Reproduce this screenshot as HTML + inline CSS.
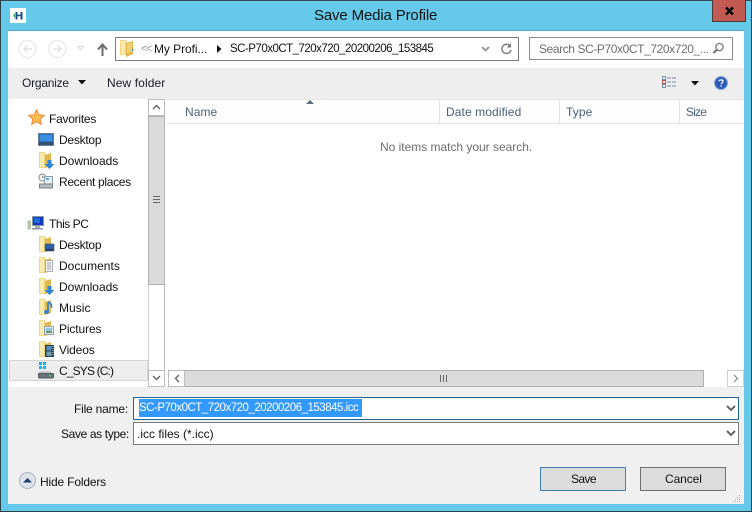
<!DOCTYPE html>
<html><head><meta charset="utf-8">
<style>
html,body{margin:0;padding:0}
body{width:752px;height:512px;overflow:hidden;position:relative;background:#65c9ea;font-family:"Liberation Sans",sans-serif;font-size:12px;color:#000}
.a{position:absolute;box-sizing:border-box}
.t{position:absolute;white-space:nowrap;line-height:14px;height:14px}
.g{color:#4c607a}
svg{position:absolute;display:block;overflow:visible}
</style></head><body>
<!-- window frame -->
<div class="a" style="left:0;top:0;width:752px;height:512px;border:1px solid #2c3e46;border-top-color:#3a4a52"></div>
<div class="a" style="left:8px;top:30px;width:736px;height:1px;background:#58a6c4"></div>
<!-- app icon -->
<div class="a" style="left:10px;top:8px;width:16px;height:15px;background:#fff"></div>
<svg style="left:10px;top:8px" width="16" height="15"><path d="M6.500 4v7.500M11.500 4v7.500" stroke="#14508c" stroke-width="2"/><path d="M7 7.500h4" stroke="#14508c" stroke-width="1.500"/><path d="M3 7.500h3" stroke="#e8a020" stroke-width="1.500"/><path d="M4.500 5.500v4" stroke="#3aa655" stroke-width="1"/></svg>
<!-- title -->
<div class="t" style="left:314px;top:8px;font-size:15px;line-height:16px;height:16px;letter-spacing:-.15px;color:#111">Save Media Profile</div>
<!-- close -->
<div class="a" style="left:712px;top:0;width:34px;height:22px;background:#c15a50;border:1px solid #4a3a3a;border-top:0"></div>
<svg style="left:725px;top:7px" width="9" height="8"><path d="M1 .5L8 7.500M8 .5L1 7.500" stroke="#000" stroke-width="2.400"/></svg>

<!-- main client -->
<div class="a" style="left:8px;top:31px;width:736px;height:473px;background:#fff"></div>
<!-- nav area -->
<svg style="left:18px;top:39px" width="20" height="20"><circle cx="9.500" cy="10" r="8.500" fill="#fff" stroke="#e6e6e6" stroke-width="1.200"/><path d="M14 10H6M9.500 6.500L6 10l3.500 3.500" fill="none" stroke="#e2e2e2" stroke-width="1.500"/></svg>
<svg style="left:48px;top:39px" width="20" height="20"><circle cx="9.500" cy="10" r="8.500" fill="#fff" stroke="#e6e6e6" stroke-width="1.200"/><path d="M5 10h8M9.500 6.500L13 10l-3.500 3.500" fill="none" stroke="#e2e2e2" stroke-width="1.500"/></svg>
<svg style="left:77px;top:46px" width="8" height="5"><path d="M.5.500h6L3.500 4z" fill="#fff" stroke="#d8d8d8"/></svg>
<svg style="left:97px;top:43px" width="12" height="14"><path d="M5.500 13V2M1 6.500L5.500 1.500 10 6.500" fill="none" stroke="#6b6b6b" stroke-width="2"/></svg>
<!-- address -->
<div class="a" style="left:115px;top:37px;width:404px;height:24px;border:1px solid #7a7a7a;background:#fff"></div>
<svg style="left:120px;top:40px" width="14" height="17"><path d="M0 0h6l1 2v13H0z" fill="#f0d880"/><path d="M1 1h4v13H1z" fill="#f8eab0"/><path d="M6 3l7-2v13l-7 3z" fill="#e0b84e"/><path d="M7 4l5-1.500v9L7 13z" fill="#f0d070"/><rect x="12" y="9" width="1.500" height="2" fill="#4a9ad8"/></svg>
<div class="t" style="left:141px;top:42px;color:#9a9a9a;font-size:11px;letter-spacing:-1.500px">&lt;&lt;</div>
<div class="t" style="left:154px;top:42px;letter-spacing:-.06px;color:#111">My Profi...</div>
<svg style="left:217px;top:45px" width="5" height="8"><path d="M0 0l4.500 4L0 8z" fill="#111"/></svg>
<div class="t" style="left:230px;top:42px;font-size:11.500px;letter-spacing:-.51px;color:#111">SC-P70x0CT_720x720_20200206_153845</div>
<svg style="left:481px;top:46px" width="9" height="7"><path d="M1 1l3.500 3.500L8 1" fill="none" stroke="#9a9a9a" stroke-width="2"/></svg>
<svg style="left:500px;top:42px" width="13" height="14"><path d="M10.500 4.500A4.600 4.600 0 1 0 11 8" fill="none" stroke="#7a7a7a" stroke-width="1.400"/><path d="M11 1v4.500H6.800z" fill="#7a7a7a"/></svg>
<!-- search -->
<div class="a" style="left:529px;top:37px;width:204px;height:23px;border:1px solid #8a8a8a;background:#fff"></div>
<div class="t" style="left:539px;top:42px;color:#6d6d6d;letter-spacing:-.41px">Search SC-P70x0CT_720x720_...</div>
<svg style="left:712px;top:42px" width="12" height="13"><circle cx="7.500" cy="5" r="3.600" fill="#fff" stroke="#888" stroke-width="1.500"/><path d="M5 7.500L1.500 11" stroke="#777" stroke-width="2.200"/></svg>

<!-- toolbar -->
<div class="a" style="left:8px;top:68px;width:736px;height:31px;background:#eeeeee"></div>
<div class="t" style="left:22px;top:76px;letter-spacing:-.23px;color:#1a1a2a">Organize</div>
<svg style="left:78px;top:80px" width="8" height="5"><path d="M0 0h8L4 4.500z" fill="#111"/></svg>
<div class="t" style="left:107px;top:76px;letter-spacing:.1px;color:#1a1a2a">New folder</div>
<svg style="left:662px;top:76px" width="16" height="13"><rect x=".5" y=".5" width="3" height="3" fill="#fff" stroke="#7a8ea8"/><rect x=".5" y="4.500" width="3" height="3" fill="#fff" stroke="#c05050"/><rect x=".5" y="8.500" width="3" height="3" fill="#fff" stroke="#7a8ea8"/><path d="M5 2h10M5 6h10M5 10h10" stroke="#7488a4" stroke-dasharray="4 1"/></svg>
<svg style="left:691px;top:81px" width="8" height="5"><path d="M0 0h8L4 4.500z" fill="#111"/></svg>
<svg style="left:714px;top:76px" width="14" height="14"><circle cx="7" cy="7" r="6.500" fill="#2f62c0" stroke="#8aa4c8"/><circle cx="7" cy="7" r="4.500" fill="#2a55b0"/><path d="M5 5.200C5.300 3.500 9 3.400 9 5.400 9 6.800 7.200 6.800 7.200 8.300" fill="none" stroke="#fff" stroke-width="1.300"/><rect x="6.500" y="9.300" width="1.400" height="1.400" fill="#fff"/></svg>

<!-- nav pane -->
<svg style="left:28px;top:109px" width="17" height="16"><path d="M8.500.8l2.300 5 5.400.6-4 3.700 1.100 5.300-4.800-2.700-4.800 2.700 1.100-5.300-4-3.700 5.400-.6z" fill="#fbbe4e" stroke="#e78a3a" stroke-width="1"/></svg>
<div class="t" style="left:49px;top:112px;letter-spacing:-.25px;color:#111">Favorites</div>

<svg style="left:38px;top:133px" width="16" height="14"><rect x=".5" y=".5" width="15" height="12" fill="#2a6fc4" stroke="#6b7f94"/><rect x="2" y="2" width="12" height="6" fill="#3b8fe0"/><rect x="1" y="9" width="14" height="3" fill="#33506e"/></svg>
<div class="t" style="left:59px;top:133px;letter-spacing:-.25px;color:#111">Desktop</div>

<svg style="left:39px;top:152px" width="17" height="17"><path d="M0 0h6l1 2v14H0z" fill="#f0d880"/><path d="M1 1h4v14H1z" fill="#f8eab0"/><path d="M6 3l6-2v13l-6 2z" fill="#e0b84e"/><path d="M8.500 8h4v4h3l-5 5-5-5h3z" fill="#2f87dc"/></svg>
<div class="t" style="left:59px;top:154px;letter-spacing:-.01px;color:#111">Downloads</div>

<svg style="left:38px;top:173px" width="16" height="16"><circle cx="4.500" cy="4.500" r="3.500" fill="#fff" stroke="#8a8a8a"/><path d="M4.500 2.500v2h2" fill="none" stroke="#777" stroke-width=".8"/><rect x="6.500" y="3.500" width="8" height="8" fill="#e6eef6" stroke="#8a9aa8"/><rect x="8" y="5" width="3" height="2" fill="#6aa8dc"/><rect x="1.500" y="11" width="13" height="4" fill="#b5bcc0" stroke="#7a8288"/></svg>
<div class="t" style="left:59px;top:175px;letter-spacing:-.33px;color:#111">Recent places</div>

<svg style="left:28px;top:216px" width="16" height="15"><rect x="0" y="5" width="2.500" height="8" fill="#c6d0b8" stroke="#7a8a70" stroke-width=".5"/><rect x="4.500" y=".5" width="11" height="9" fill="#1438b8" stroke="#8a97a6"/><rect x="6" y="2" width="6" height="5" fill="#1e6ce0"/><rect x="7" y="10" width="5" height="2" fill="#a4acb4"/><rect x="4" y="12" width="11" height="1.500" fill="#8c949c"/></svg>
<div class="t" style="left:49px;top:217px;letter-spacing:-.47px;color:#111">This PC</div>

<svg style="left:39px;top:236px" width="17" height="17"><path d="M0 0h6l1 2v14H0z" fill="#f0d880"/><path d="M1 1h4v14H1z" fill="#f8eab0"/><path d="M6 3l6-2v13l-6 2z" fill="#e0b84e"/><rect x="6" y="8" width="9" height="7" fill="#2b5fa8" stroke="#39536f" stroke-width=".6"/><rect x="7" y="13" width="7" height="1.500" fill="#26384c"/></svg>
<div class="t" style="left:59px;top:238px;letter-spacing:-.25px;color:#111">Desktop</div>

<svg style="left:39px;top:257px" width="17" height="17"><path d="M0 0h6l1 2v14H0z" fill="#f0d880"/><path d="M1 1h4v14H1z" fill="#f8eab0"/><path d="M6 3l6-2v13l-6 2z" fill="#e0b84e"/><rect x="6.500" y="3.500" width="7" height="11" fill="#f6f6f6" stroke="#aaa"/><path d="M8 6h4M8 8h4M8 10h4M8 12h4" stroke="#9aa0a8"/></svg>
<div class="t" style="left:59px;top:259px;letter-spacing:.02px;color:#111">Documents</div>

<svg style="left:39px;top:278px" width="17" height="17"><path d="M0 0h6l1 2v14H0z" fill="#f0d880"/><path d="M1 1h4v14H1z" fill="#f8eab0"/><path d="M6 3l6-2v13l-6 2z" fill="#e0b84e"/><path d="M8.500 8h4v4h3l-5 5-5-5h3z" fill="#2f87dc"/></svg>
<div class="t" style="left:59px;top:280px;letter-spacing:-.01px;color:#111">Downloads</div>

<svg style="left:39px;top:299px" width="17" height="17"><path d="M0 0h6l1 2v14H0z" fill="#f0d880"/><path d="M1 1h4v14H1z" fill="#f8eab0"/><path d="M6 3l6-2v13l-6 2z" fill="#e0b84e"/><path d="M9 3v10" stroke="#2f7fd0" stroke-width="1.600"/><path d="M9 3c3 1 4 3 3.500 6" fill="none" stroke="#2f7fd0" stroke-width="1.500"/><ellipse cx="7.500" cy="13" rx="2.500" ry="2" fill="#2f7fd0"/></svg>
<div class="t" style="left:59px;top:301px;letter-spacing:.03px;color:#111">Music</div>

<svg style="left:39px;top:320px" width="17" height="17"><path d="M0 0h6l1 2v14H0z" fill="#f0d880"/><path d="M1 1h4v14H1z" fill="#f8eab0"/><path d="M6 3l6-2v13l-6 2z" fill="#e0b84e"/><rect x="5.500" y="6.500" width="9" height="8" fill="#dde8ee" stroke="#99a2a8"/><rect x="7" y="8" width="6" height="3" fill="#8fc4e4"/><rect x="7" y="11" width="6" height="2" fill="#6c9a68"/></svg>
<div class="t" style="left:59px;top:322px;letter-spacing:-.12px;color:#111">Pictures</div>

<svg style="left:39px;top:341px" width="17" height="17"><path d="M0 0h6l1 2v14H0z" fill="#f0d880"/><path d="M1 1h4v14H1z" fill="#f8eab0"/><path d="M6 3l6-2v13l-6 2z" fill="#e0b84e"/><rect x="6" y="4" width="9" height="12" fill="#2b3f50"/><rect x="7.500" y="5" width="5" height="4.500" fill="#4f93c8"/><rect x="7.500" y="10.500" width="5" height="4.500" fill="#6fa0b0"/><path d="M14 5v10" stroke="#d8d8d8" stroke-dasharray="1 1"/></svg>
<div class="t" style="left:59px;top:343px;letter-spacing:-.15px;color:#111">Videos</div>

<div class="a" style="left:9px;top:360px;width:139px;height:21px;background:#eeeeee;border:1px solid #d4d4d4"></div>
<svg style="left:38px;top:362px" width="16" height="17"><rect x="1" y="0" width="3" height="3" fill="#10b4f4"/><rect x="5" y="0" width="3" height="3" fill="#10b4f4"/><rect x="1" y="4" width="3" height="3" fill="#10b4f4"/><rect x="5" y="4" width="3" height="3" fill="#10b4f4"/><path d="M2 9h10l3 3H0z" fill="#c4c8cc"/><rect x=".5" y="11.500" width="15" height="4.500" rx="1" fill="#6a7478" stroke="#50585c"/><rect x="11" y="13" width="2" height="1.500" fill="#40d060"/></svg>
<div class="t" style="left:59px;top:364px;letter-spacing:-.85px;color:#111">C_SYS (C:)</div>

<!-- vertical scrollbar -->
<div class="a" style="left:148px;top:99px;width:17px;height:288px;background:#fff;border:1px solid #b8b8b8;border-top:0;border-bottom:0;border-left-color:#d0d0d0"></div>
<div class="a" style="left:148px;top:99px;width:17px;height:17px;background:#fff;border:1px solid #bcbcbc"></div>
<svg style="left:152px;top:104px" width="9" height="6"><path d="M1 5l3.500-3.500L8 5" fill="none" stroke="#666" stroke-width="1.400"/></svg>
<div class="a" style="left:148px;top:116px;width:17px;height:169px;background:#dadada;border:1px solid #b0b0b0"></div>
<div class="a" style="left:153px;top:196px;width:7px;height:1px;background:#666"></div>
<div class="a" style="left:153px;top:199px;width:7px;height:1px;background:#666"></div>
<div class="a" style="left:153px;top:202px;width:7px;height:1px;background:#666"></div>
<div class="a" style="left:148px;top:370px;width:17px;height:17px;background:#fff;border:1px solid #bcbcbc"></div>
<svg style="left:152px;top:375px" width="9" height="6"><path d="M1 1l3.500 3.500L8 1" fill="none" stroke="#666" stroke-width="1.400"/></svg>

<!-- list header -->
<div class="a" style="left:166px;top:99px;width:578px;height:25px;background:#fdfdfd;border-top:1px solid #e4e4e4;border-bottom:1px solid #e4e4e4"></div>
<div class="a" style="left:439px;top:100px;width:1px;height:23px;background:#e4e4e4"></div>
<div class="a" style="left:559px;top:100px;width:1px;height:23px;background:#e4e4e4"></div>
<div class="a" style="left:679px;top:100px;width:1px;height:23px;background:#e4e4e4"></div>
<div class="t g" style="left:185px;top:105px;letter-spacing:.05px">Name</div>
<svg style="left:306px;top:100px" width="8" height="4"><path d="M0 4L4 0l4 4z" fill="#5a6c84"/></svg>
<div class="t g" style="left:446px;top:105px;letter-spacing:.1px">Date modified</div>
<div class="t g" style="left:566px;top:105px;letter-spacing:.1px">Type</div>
<div class="t g" style="left:686px;top:105px;letter-spacing:-.8px">Size</div>
<div class="t" style="left:380px;top:140px;color:#6d6d6d;letter-spacing:-.02px">No items match your search.</div>

<!-- horizontal scrollbar -->
<div class="a" style="left:168px;top:370px;width:576px;height:17px;background:#fff"></div>
<div class="a" style="left:168px;top:370px;width:17px;height:17px;background:#fff;border:1px solid #bcbcbc"></div>
<svg style="left:174px;top:374px" width="6" height="9"><path d="M5 1L1.500 4.500 5 8" fill="none" stroke="#666" stroke-width="1.400"/></svg>
<div class="a" style="left:185px;top:370px;width:519px;height:17px;background:#dadada;border:1px solid #b0b0b0;border-left:0"></div>
<div class="a" style="left:440px;top:375px;width:1px;height:7px;background:#666"></div>
<div class="a" style="left:443px;top:375px;width:1px;height:7px;background:#666"></div>
<div class="a" style="left:446px;top:375px;width:1px;height:7px;background:#666"></div>
<div class="a" style="left:727px;top:370px;width:17px;height:17px;background:#fff;border:1px solid #d0d0d0"></div>
<svg style="left:733px;top:374px" width="6" height="9"><path d="M1 1l3.500 3.500L1 8" fill="none" stroke="#888" stroke-width="1.200"/></svg>

<!-- bottom panel -->
<div class="a" style="left:8px;top:387px;width:736px;height:117px;background:#f0f0f0"></div>
<div class="t" style="left:74px;top:402px;letter-spacing:-.2px;color:#111">File name:</div>
<div class="a" style="left:133px;top:397px;width:606px;height:23px;background:#fff;border:1px solid #1f6397"></div>
<div class="a" style="left:139px;top:399px;width:223px;height:18px;background:#3399ff"></div>
<div class="t" style="left:139px;top:401px;color:#fff;font-size:11.500px;letter-spacing:-.49px">SC-P70x0CT_720x720_20200206_153845.icc</div>
<svg style="left:726px;top:405px" width="10" height="7"><path d="M1 1l4 4 4-4" fill="none" stroke="#666" stroke-width="2"/></svg>
<div class="t" style="left:61px;top:427px;letter-spacing:-.37px;color:#111">Save as type:</div>
<div class="a" style="left:133px;top:422px;width:606px;height:23px;background:#fff;border:1px solid #7a7a7a"></div>
<div class="t" style="left:137px;top:427px;letter-spacing:0;color:#111">.icc files (*.icc)</div>
<svg style="left:726px;top:430px" width="10" height="7"><path d="M1 1l4 4 4-4" fill="none" stroke="#666" stroke-width="2"/></svg>

<svg style="left:19px;top:472px" width="17" height="17"><circle cx="8.500" cy="8.500" r="8" fill="#dfe3ea" stroke="#aab2c0"/><path d="M4 10.500L8.500 6l4.500 4.500z" fill="#1f3d74"/></svg>
<div class="t" style="left:40px;top:475px;letter-spacing:-.17px;color:#111">Hide Folders</div>

<div class="a" style="left:540px;top:467px;width:86px;height:24px;background:#dcdcdc;border:1px solid #3c7fb1"></div>
<div class="t" style="left:571px;top:472px;letter-spacing:-.6px;color:#111">Save</div>
<div class="a" style="left:640px;top:467px;width:86px;height:24px;background:#dcdcdc;border:1px solid #707070"></div>
<div class="t" style="left:665px;top:472px;letter-spacing:-.1px;color:#111">Cancel</div>
<svg style="left:733px;top:495px" width="8" height="8" fill="#b0b0b0"><rect x="6" y="0" width="1" height="1"/><rect x="4" y="2" width="1" height="1"/><rect x="6" y="2" width="1" height="1"/><rect x="2" y="4" width="1" height="1"/><rect x="4" y="4" width="1" height="1"/><rect x="6" y="4" width="1" height="1"/><rect x="0" y="6" width="1" height="1"/><rect x="2" y="6" width="1" height="1"/><rect x="4" y="6" width="1" height="1"/><rect x="6" y="6" width="1" height="1"/></svg>
</body></html>
